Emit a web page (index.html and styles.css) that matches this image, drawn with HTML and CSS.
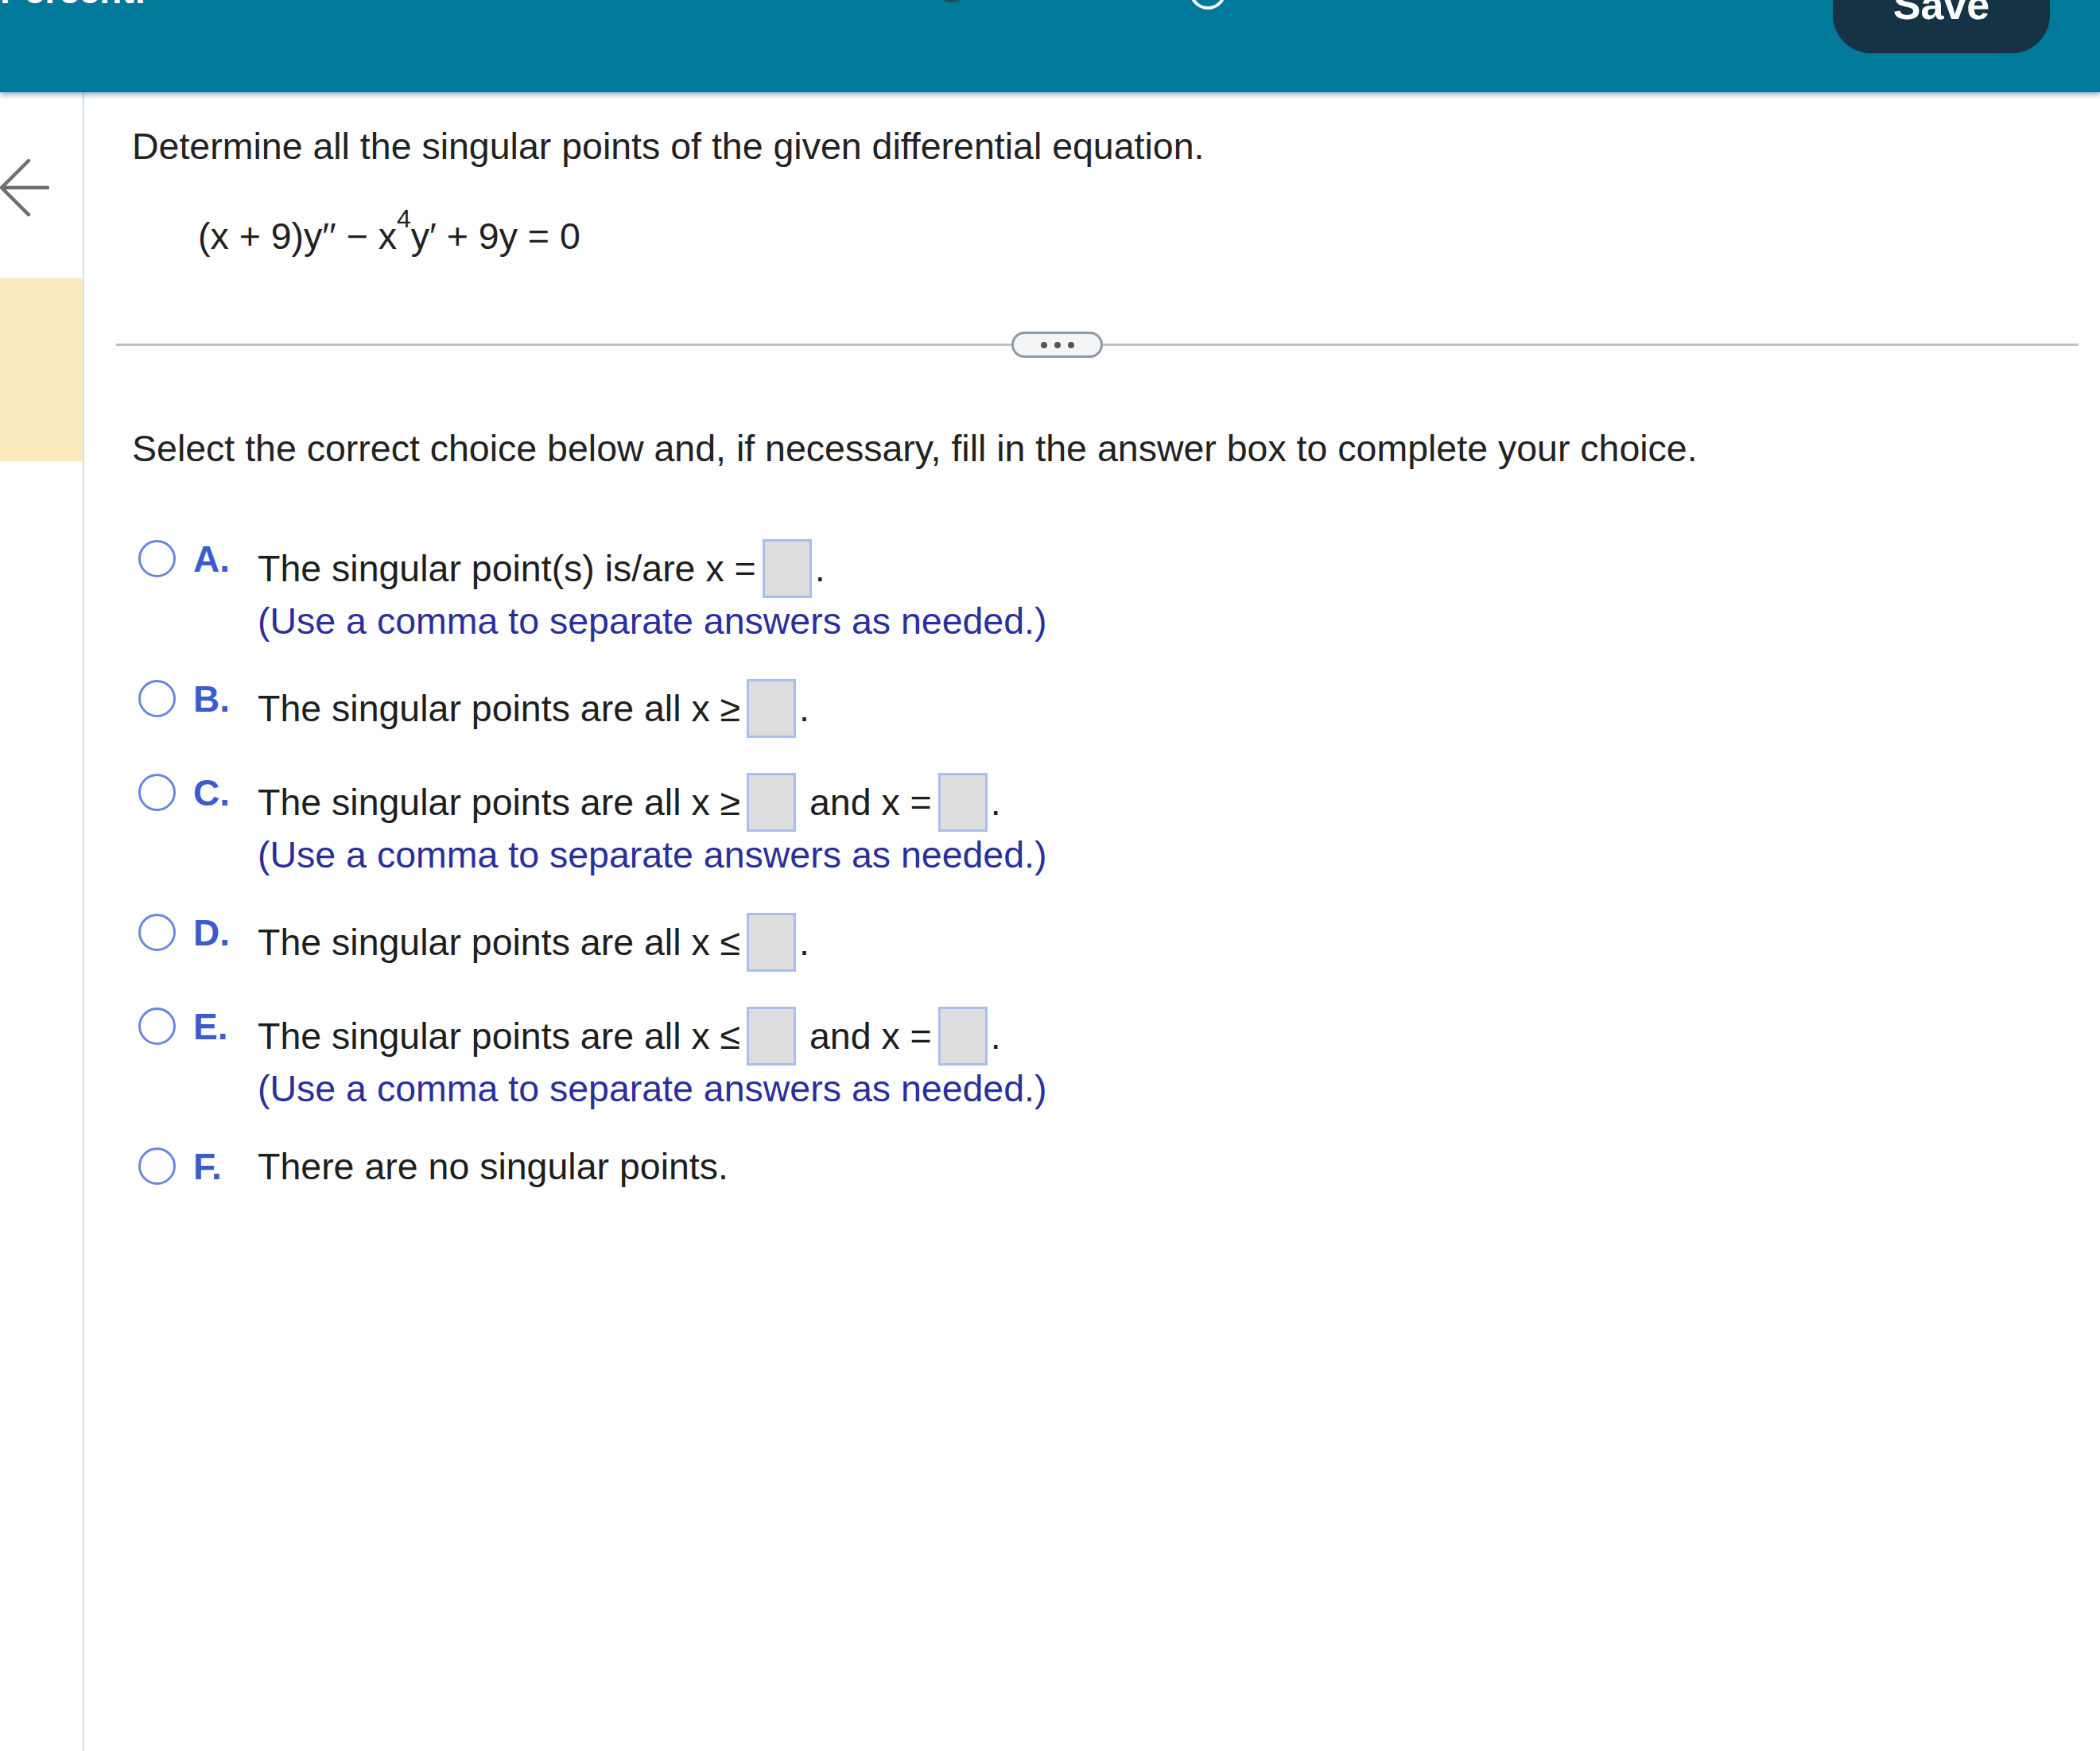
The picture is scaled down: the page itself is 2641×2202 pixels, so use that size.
FILE: index.html
```html
<!DOCTYPE html>
<html lang="en">
<head>
<meta charset="utf-8">
<title>Singular points</title>
<link rel="stylesheet" href="styles.css">
</head>
<body>
<div class="page">
  <header class="topbar">
    <div class="crumb">Percent:</div>
    <div class="top-dot"></div>
    <div class="top-ring"></div>
    <div class="save">Save</div>
  </header>
  <div class="workspace">
    <aside class="sidebar">
      <svg class="back" viewBox="0 0 62 72" width="62" height="72" aria-hidden="true">
        <path d="M2 36 L36 2 M2 36 L36 70 M2 36 H60" fill="none" stroke="#6f6f6f" stroke-width="4.5" stroke-linecap="round" stroke-linejoin="round"/>
      </svg>
      <div class="flag"></div>
    </aside>
    <main class="main">
      <p class="q-title">Determine all the singular points of the given differential equation.</p>
      <div class="eq">(x + 9)y′′ − x<sup>4</sup>y′ + 9y = 0</div>
      <div class="divider">
        <div class="line-l"></div>
        <div class="pill"><i></i><i></i><i></i></div>
        <div class="line-r"></div>
      </div>
      <p class="prompt">Select the correct choice below and, if necessary, fill in the answer box to complete your choice.</p>
      <div class="options">
        <div class="opt">
          <span class="radio"></span>
          <span class="letter">A.</span>
          <div class="body">
            <div class="line">The singular point(s) is/are x = <span class="box"></span>.</div>
            <div class="hint">(Use a comma to separate answers as needed.)</div>
          </div>
        </div>
        <div class="opt">
          <span class="radio"></span>
          <span class="letter">B.</span>
          <div class="body">
            <div class="line">The singular points are all x ≥ <span class="box"></span>.</div>
          </div>
        </div>
        <div class="opt">
          <span class="radio"></span>
          <span class="letter">C.</span>
          <div class="body">
            <div class="line">The singular points are all x ≥ <span class="box"></span> and x = <span class="box"></span>.</div>
            <div class="hint">(Use a comma to separate answers as needed.)</div>
          </div>
        </div>
        <div class="opt">
          <span class="radio"></span>
          <span class="letter">D.</span>
          <div class="body">
            <div class="line">The singular points are all x ≤ <span class="box"></span>.</div>
          </div>
        </div>
        <div class="opt">
          <span class="radio"></span>
          <span class="letter">E.</span>
          <div class="body">
            <div class="line">The singular points are all x ≤ <span class="box"></span> and x = <span class="box"></span>.</div>
            <div class="hint">(Use a comma to separate answers as needed.)</div>
          </div>
        </div>
        <div class="opt">
          <span class="radio"></span>
          <span class="letter">F.</span>
          <div class="body">
            <div class="line">There are no singular points.</div>
          </div>
        </div>
      </div>
    </main>
  </div>
</div>
</body>
</html>
```

FILE: styles.css
```css
html, body {
  margin: 0;
  padding: 0;
  background: #ffffff;
}
body {
  font-family: "Liberation Sans", Arial, sans-serif;
  color: #222222;
}
.page {
  display: flex;
  flex-direction: column;
  min-height: 100vh;
}

/* top bar */
.topbar {
  height: 116px;
  flex: none;
  background: #00799b;
  display: flex;
  align-items: flex-start;
  overflow: hidden;
  box-shadow: 0 3px 7px rgba(0, 80, 110, 0.45);
  position: relative;
  z-index: 1;
}
.crumb {
  flex: 0 0 1175px;
  color: #ffffff;
  font-size: 46px;
  font-weight: bold;
  line-height: 53px;
  margin-top: -38px;
  white-space: nowrap;
}
.top-dot {
  flex: none;
  width: 43px;
  height: 43px;
  border-radius: 50%;
  background: #1d4a5c;
  margin-top: -40px;
}
.top-ring {
  flex: none;
  width: 46px;
  height: 46px;
  box-sizing: border-box;
  border: 4px solid #ffffff;
  border-radius: 50%;
  margin-left: 278px;
  margin-top: -34px;
}
.save {
  flex: none;
  margin-left: auto;
  margin-right: 63px;
  margin-top: -43px;
  width: 273px;
  height: 110px;
  box-sizing: border-box;
  padding-top: 23px;
  border-radius: 48px;
  background: #163245;
  color: #ffffff;
  font-size: 52px;
  font-weight: bold;
  line-height: 52px;
  text-align: center;
}

/* body */
.workspace {
  flex: 1;
  display: flex;
}
.sidebar {
  flex: none;
  width: 104px;
  border-right: 2px solid #d8deea;
  padding-top: 84px;
}
.back {
  display: block;
}
.flag {
  margin-top: 78px;
  height: 230px;
  background: #faeabd;
}
.main {
  flex: 1;
  padding: 42px 27px 0 60px;
}
.q-title {
  margin: 0;
  font-size: 46.5px;
  line-height: 53px;
}
.eq {
  margin: 60px 0 0 83px;
  font-size: 46.5px;
  line-height: 53px;
}
.eq sup {
  font-size: 32px;
  line-height: 0;
  vertical-align: 27px;
}
.divider {
  display: flex;
  align-items: center;
  height: 33px;
  margin: 93px 0 0 -20px;
}
.line-l {
  flex: none;
  width: 1126px;
  height: 3px;
  background: #bcc3cd;
}
.line-r {
  flex: 1;
  height: 3px;
  background: #bcc3cd;
}
.pill {
  flex: none;
  width: 115px;
  height: 33px;
  box-sizing: border-box;
  border: 3px solid #8e99a6;
  border-radius: 17px;
  background: #f4f5f7;
  display: flex;
  justify-content: center;
  align-items: center;
  gap: 9px;
}
.pill i {
  display: block;
  width: 8px;
  height: 8px;
  border-radius: 50%;
  background: #555555;
}
.prompt {
  margin: 88px 0 0;
  font-size: 46.5px;
  line-height: 53px;
}

/* options */
.options {
  margin: 87px 0 0 8px;
}
.opt {
  display: flex;
  align-items: flex-start;
  margin-bottom: 44px;
}
.radio {
  flex: none;
  width: 47px;
  height: 47px;
  box-sizing: border-box;
  border: 3px solid #6a86e0;
  border-radius: 50%;
  margin-top: 1px;
}
.letter {
  flex: none;
  width: 81px;
  margin-left: 22px;
  font-size: 46px;
  line-height: 50px;
  font-weight: bold;
  color: #3b5bcf;
}
.body {
  font-size: 46.5px;
  color: #1e1e1e;
}
.line {
  line-height: 50px;
  white-space: nowrap;
}
.hint {
  line-height: 58px;
  color: #2b2f9c;
  white-space: nowrap;
}
.box {
  display: inline-block;
  width: 62px;
  height: 74px;
  box-sizing: border-box;
  background: #dedede;
  border: 3px solid #a7bfee;
  vertical-align: -21px;
  margin-left: -5px;
  margin-right: 4px;
}
```
